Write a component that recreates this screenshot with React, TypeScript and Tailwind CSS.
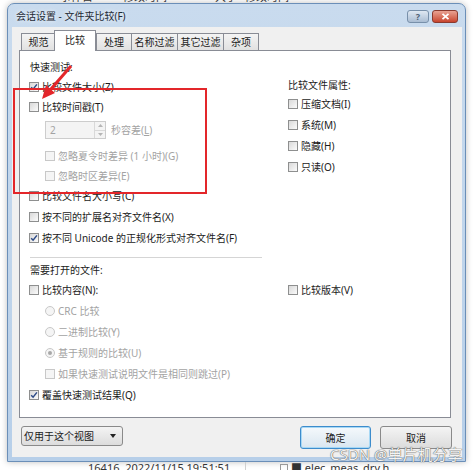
import type { ReactNode } from 'react'

function Box({ checked, disabled }: { checked?: boolean; disabled?: boolean }) {
  return (
    <span
      className={`mr-[3px] flex h-[10px] w-[10px] shrink-0 items-center justify-center border ${
        disabled ? 'border-[#c8c8c8] bg-[#f5f5f5]' : 'border-[#8e8f8f] bg-gradient-to-br from-[#d9d9d9] to-[#fbfbfb]'
      }`}
    >
      {checked ? (
        <svg width="8" height="8" viewBox="0 0 8 8">
          <path d="M1.2 4.2 L3.1 6.2 L6.9 1.4" fill="none" stroke="#2c4a86" strokeWidth="1.5" />
        </svg>
      ) : null}
    </span>
  )
}

function Radio({ selected }: { selected?: boolean }) {
  return (
    <span className="mr-[3px] flex h-[10px] w-[10px] shrink-0 items-center justify-center rounded-full border border-[#c8c8c8] bg-[#f5f5f5]">
      {selected ? <span className="h-[4px] w-[4px] rounded-full bg-[#a8a8a8]" /> : null}
    </span>
  )
}

function Row({
  children,
  className = 'h-[21px]',
  disabled,
}: {
  children: ReactNode
  className?: string
  disabled?: boolean
}) {
  return (
    <div className={`flex items-center whitespace-nowrap ${disabled ? 'text-[#a3a3a3]' : 'text-[#1b1b1b]'} ${className}`}>
      {children}
    </div>
  )
}

const tabBase = 'flex items-center justify-center border border-b-0 border-[#898c95]'
const tabIdle = `${tabBase} h-[17px] bg-gradient-to-b from-[#f4f4f4] to-[#e1e1e1] text-[#1b1b1b]`

export default function App() {
  return (
    <div className="relative h-[470px] w-[474px] overflow-hidden bg-white font-['Noto_Sans','Noto_Sans_CJK_SC',sans-serif] text-[10px] leading-none">
      {/* what peeks out behind the dialog */}
      <div className="flex h-[3px] overflow-hidden pl-[60px] text-[11px] text-[#333]">
        <span className="-mt-[9px] w-[63px]">事件日</span>
        <span className="-mt-[9px] w-[92px]">修改时间</span>
        <span className="-mt-[9px] w-[30px]">大小</span>
        <span className="-mt-[9px]">修改时间</span>
      </div>

      <div className="ml-[7px] flex h-[459px] w-[459px] flex-col rounded-t-[7px] border border-[#6b8fb8] bg-gradient-to-b from-[#c9dbee] to-[#b7cfe9] shadow-[0_0_6px_rgba(0,0,0,0.25)]">
        <div className="flex h-[23px] items-center pl-[8px] pr-[7px]">
          <span className="text-[10px] text-[#1e2a36] [text-shadow:0_0_4px_#ffffff]">会话设置 - 文件夹比较(F)</span>
          <div className="ml-auto flex gap-[3px] self-start pt-[6px]">
            <div className="flex h-[13px] w-[22px] items-center justify-center rounded-[3px] border border-[#7890aa] bg-gradient-to-b from-[#dfe8f2] to-[#aabdd3] text-[9px] font-bold text-[#4d6176]">
              ?
            </div>
            <div className="flex h-[13px] w-[26px] items-center justify-center rounded-[3px] border border-[#8a3a2f] bg-gradient-to-b from-[#e8a192] to-[#c7432d]">
              <svg width="9" height="7" viewBox="0 0 9 7">
                <path d="M1.5 0.8 L7.5 6.2 M7.5 0.8 L1.5 6.2" stroke="#ffffff" strokeWidth="1.8" />
              </svg>
            </div>
          </div>
        </div>

        <div className="mb-[4px] ml-[4px] mr-[3px] flex flex-1 flex-col bg-[#f0f0f0] pl-[7px] pr-[11px] pt-[4px]">
          <div className="flex h-[19px] items-end pl-[2px]">
            <div className={`${tabIdle} w-[35px]`}>规范</div>
            <div className={`${tabBase} relative z-10 -mb-px -ml-[2px] h-[21px] w-[42px] bg-white pb-[2px] text-[#1b1b1b]`}>比较</div>
            <div className={`${tabIdle} w-[36px]`}>处理</div>
            <div className={`${tabIdle} -ml-px w-[47px]`}>名称过滤</div>
            <div className={`${tabIdle} -ml-px w-[47px]`}>其它过滤</div>
            <div className={`${tabIdle} -ml-px w-[36px]`}>杂项</div>
          </div>

          <div className="flex h-[368px] w-[432px] flex-col border border-[#898c95] bg-white pl-[9px]">
            <div className="mt-[6px] flex">
              <div className="flex w-[259px] flex-col">
                <Row className="h-[20px] pl-px">快速测试:</Row>
                <Row className="h-[20px]">
                  <Box checked />
                  比较文件大小(Z)
                </Row>
                <Row className="h-[20px]">
                  <Box />
                  比较时间戳(T)
                </Row>
                <div className="ml-[16px] mt-[4px] flex h-[18px] items-center">
                  <div className="flex h-[18px] w-[61px] items-stretch border border-[#cdcdcd] bg-[#f4f4f4]">
                    <span className="flex flex-1 items-center pl-[4px] text-[#a3a3a3]">2</span>
                    <div className="flex w-[11px] flex-col border-l border-[#d9d9d9]">
                      <div className="flex flex-1 items-center justify-center border-b border-[#d9d9d9]">
                        <svg width="5" height="3" viewBox="0 0 5 3">
                          <path d="M0 3 L2.5 0 L5 3 Z" fill="#b5b5b5" />
                        </svg>
                      </div>
                      <div className="flex flex-1 items-center justify-center">
                        <svg width="5" height="3" viewBox="0 0 5 3">
                          <path d="M0 0 L2.5 3 L5 0 Z" fill="#b5b5b5" />
                        </svg>
                      </div>
                    </div>
                  </div>
                  <span className="ml-[5px] text-[#a3a3a3]">
                    秒容差(<span className="underline">L</span>)
                  </span>
                </div>
                <Row className="ml-[16px] mt-[7px] h-[20px]" disabled>
                  <Box disabled />
                  忽略夏令时差异 (1 小时)(G)
                </Row>
                <Row className="ml-[16px] h-[20px]" disabled>
                  <Box disabled />
                  忽略时区差异(E)
                </Row>
                <Row className="h-[20px]">
                  <Box />
                  比较文件名大小写(C)
                </Row>
                <Row>
                  <Box />
                  按不同的扩展名对齐文件名(X)
                </Row>
                <Row>
                  <Box checked />
                  按不同 Unicode 的正规化形式对齐文件名(F)
                </Row>
              </div>
              <div className="flex flex-col pt-[20px]">
                <Row className="h-[16px]">比较文件属性:</Row>
                <Row>
                  <Box />
                  压缩文档(I)
                </Row>
                <Row>
                  <Box />
                  系统(M)
                </Row>
                <Row>
                  <Box />
                  隐藏(H)
                </Row>
                <Row>
                  <Box />
                  只读(O)
                </Row>
              </div>
            </div>

            <div className="ml-px mt-[9px] h-px w-[232px] bg-[#d5d5d5]" />

            <div className="mt-[2px] flex">
              <div className="flex w-[259px] flex-col">
                <Row className="h-[20px] pl-px">需要打开的文件:</Row>
                <Row className="h-[20px]">
                  <Box />
                  比较内容(N):
                </Row>
                <Row className="ml-[16px] h-[21px]" disabled>
                  <Radio />
                  CRC 比较
                </Row>
                <Row className="ml-[16px] h-[21px]" disabled>
                  <Radio />
                  二进制比较(Y)
                </Row>
                <Row className="ml-[16px] h-[21px]" disabled>
                  <Radio selected />
                  基于规则的比较(U)
                </Row>
                <Row className="ml-[16px] h-[21px]" disabled>
                  <Box disabled />
                  如果快速测试说明文件是相同则跳过(P)
                </Row>
                <Row>
                  <Box checked />
                  覆盖快速测试结果(Q)
                </Row>
              </div>
              <div className="flex flex-col pt-[20px]">
                <Row className="h-[20px]">
                  <Box />
                  比较版本(V)
                </Row>
              </div>
            </div>
          </div>

          <div className="-mr-px mt-[8px] flex h-[23px] items-start">
            <div className="ml-[2px] flex h-[20px] w-[102px] items-center rounded-[3px] border border-[#8a8a8a] bg-gradient-to-b from-[#f4f4f4] to-[#dcdcdc] pl-[2px] pr-[6px] text-[#1b1b1b]">
              仅用于这个视图
              <svg className="ml-auto" width="6" height="4" viewBox="0 0 6 4">
                <path d="M0 0 L6 0 L3 4 Z" fill="#222" />
              </svg>
            </div>
            <div className="ml-auto flex h-[23px] w-[71px] items-center justify-center rounded-[3px] border border-[#3d8ccc] bg-gradient-to-b from-[#f5f9fc] to-[#d9e6f0] text-[#1b1b1b] shadow-[inset_0_0_0_1px_#a7d8f5]">
              确定
            </div>
            <div className="ml-[9px] flex h-[23px] w-[72px] items-center justify-center rounded-[3px] border border-[#8a8a8a] bg-gradient-to-b from-[#f4f4f4] to-[#dcdcdc] text-[#1b1b1b]">
              取消
            </div>
          </div>
        </div>
      </div>

      <div className="flex h-[8px] items-start overflow-hidden text-[11px] leading-[12px] text-[#333]">
        <span className="ml-[88px] w-[157px]">16416&nbsp;&nbsp;2022/11/15 19:51:51</span>
        <span className="h-full w-px bg-[#d0d0d0]" />
        <span className="ml-[34px] flex items-center gap-[3px]">
          <span className="h-[8px] w-[8px] border border-[#999]" />
          ■ elec_meas_drv.h
        </span>
      </div>

      {/* red annotation over the dialog */}
      <div className="pointer-events-none absolute left-[13px] top-[88px] h-[106px] w-[194px] border-[2.5px] border-[#e3262a]" />
      <svg className="pointer-events-none absolute left-0 top-0" width="474" height="470">
        <line x1="71" y1="66" x2="51" y2="89" stroke="#e3262a" strokeWidth="3" />
        <polygon points="42,99 55,93 46,85" fill="#e3262a" />
      </svg>

      <div className="pointer-events-none absolute left-[330px] top-[444px] text-[15px] leading-[20px] text-[#f3f3f3] [text-shadow:0_0_1px_#555,0_0_1px_#555]">
        CSDN @单片机分享
      </div>
    </div>
  )
}
